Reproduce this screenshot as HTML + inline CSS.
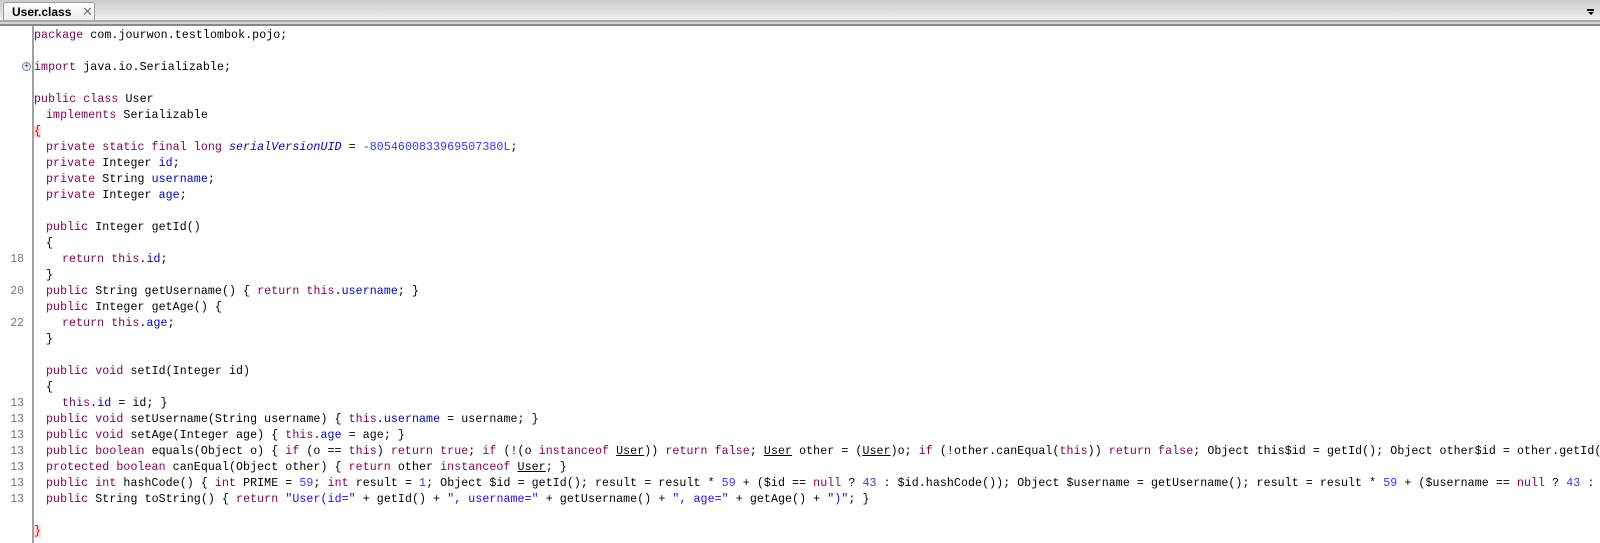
<!DOCTYPE html>
<html><head><meta charset="utf-8"><style>
html,body{margin:0;width:1600px;height:543px;overflow:hidden;background:#fff;font-family:"Liberation Mono",monospace;}
.bar{position:absolute;left:0;top:0;width:1600px;height:20px;background:linear-gradient(#cbcbcb,#efefef);}
.tab{position:absolute;left:3px;top:2px;width:92px;height:19px;background:linear-gradient(#ffffff,#eaeaea);border:1px solid #9a9a9a;border-bottom:none;border-radius:3px 3px 0 0;box-sizing:border-box;font:bold 12px "Liberation Sans",sans-serif;color:#000;}
.tab span{position:absolute;left:8px;top:2px}
.tab i{position:absolute;left:78px;top:1px;font-style:normal;font-weight:normal;color:#777;font-size:13px}
.l1{position:absolute;left:0;top:20px;width:1600px;height:2px;background:#a8a8a8}
.l2{position:absolute;left:0;top:22px;width:1600px;height:2px;background:#d4d4d4}
.l3{position:absolute;left:0;top:24px;width:1600px;height:2px;background:#888}
.gut{position:absolute;left:32px;top:26px;width:2px;height:517px;background:#a0a0a0}
.ln{position:absolute;left:0;width:24px;text-align:right;color:#777;font-size:11.5px;line-height:16px;margin-top:2px}
.c{position:absolute;left:34px;right:0;overflow:hidden;white-space:pre;font-size:11.6px;letter-spacing:0.08px;line-height:16px;color:#000;margin-top:2px}
.k{color:#7f0055}.f{color:#0000c0}.s{color:#2a00ff}.n{color:#3333ff}.it{font-style:italic;color:#0000c0}
.u{text-decoration:underline}
.br{color:#e00;background:#ffd8d8}
.plus{position:absolute;left:22px;top:62px;width:7px;height:7px;border:1px solid #6b7fa0;border-radius:50%;font-size:8px;line-height:7px;text-align:center;color:#334;background:#eef}
.dd{position:absolute;left:1587px;top:9px;width:7px;height:2px;background:#000}
.dd2{position:absolute;left:1588px;top:12px;width:0;height:0;border-left:3px solid transparent;border-right:3px solid transparent;border-top:3px solid #000}
</style></head><body>
<div class="bar"></div>
<div class="tab"><span>User.class</span><i>✕</i></div>
<div class="dd"></div><div class="dd2"></div>
<div class="l1"></div><div class="l2"></div><div class="l3"></div>
<div class="gut"></div>
<div class="plus">+</div>
<div class="ln" style="top:250px">18</div>
<div class="ln" style="top:282px">20</div>
<div class="ln" style="top:314px">22</div>
<div class="ln" style="top:394px">13</div>
<div class="ln" style="top:410px">13</div>
<div class="ln" style="top:426px">13</div>
<div class="ln" style="top:442px">13</div>
<div class="ln" style="top:458px">13</div>
<div class="ln" style="top:474px">13</div>
<div class="ln" style="top:490px">13</div>

<div class="c" style="top:26px"><span class="k">package</span> com.jourwon.testlombok.pojo;</div>
<div class="c" style="top:58px"><span class="k">import</span> java.io.Serializable;</div>
<div class="c" style="top:90px"><span class="k">public class</span> User</div>
<div class="c" style="top:106px;left:46px"><span class="k">implements</span> Serializable</div>
<div class="c" style="top:122px"><span class="br">{</span></div>
<div class="c" style="top:138px;left:46px"><span class="k">private static final long</span> <span class="it">serialVersionUID</span> = <span class="n">-8054600833969507380L</span>;</div>
<div class="c" style="top:154px;left:46px"><span class="k">private</span> Integer <span class="f">id</span>;</div>
<div class="c" style="top:170px;left:46px"><span class="k">private</span> String <span class="f">username</span>;</div>
<div class="c" style="top:186px;left:46px"><span class="k">private</span> Integer <span class="f">age</span>;</div>
<div class="c" style="top:218px;left:46px"><span class="k">public</span> Integer getId()</div>
<div class="c" style="top:234px;left:46px">{</div>
<div class="c" style="top:250px;left:62px"><span class="k">return this</span>.<span class="f">id</span>;</div>
<div class="c" style="top:266px;left:46px">}</div>
<div class="c" style="top:282px;left:46px"><span class="k">public</span> String getUsername() { <span class="k">return this</span>.<span class="f">username</span>; }</div>
<div class="c" style="top:298px;left:46px"><span class="k">public</span> Integer getAge() {</div>
<div class="c" style="top:314px;left:62px"><span class="k">return this</span>.<span class="f">age</span>;</div>
<div class="c" style="top:330px;left:46px">}</div>
<div class="c" style="top:362px;left:46px"><span class="k">public void</span> setId(Integer id)</div>
<div class="c" style="top:378px;left:46px">{</div>
<div class="c" style="top:394px;left:62px"><span class="k">this</span>.<span class="f">id</span> = id; }</div>
<div class="c" style="top:410px;left:46px"><span class="k">public void</span> setUsername(String username) { <span class="k">this</span>.<span class="f">username</span> = username; }</div>
<div class="c" style="top:426px;left:46px"><span class="k">public void</span> setAge(Integer age) { <span class="k">this</span>.<span class="f">age</span> = age; }</div>
<div class="c" style="top:442px;left:46px"><span class="k">public boolean</span> equals(Object o) { <span class="k">if</span> (o == <span class="k">this</span>) <span class="k">return true</span>; <span class="k">if</span> (!(o <span class="k">instanceof</span> <span class="u">User</span>)) <span class="k">return false</span>; <span class="u">User</span> other = (<span class="u">User</span>)o; <span class="k">if</span> (!other.canEqual(<span class="k">this</span>)) <span class="k">return false</span>; Object this$id = getId(); Object other$id = other.getId(); Object</div>
<div class="c" style="top:458px;left:46px"><span class="k">protected boolean</span> canEqual(Object other) { <span class="k">return</span> other <span class="k">instanceof</span> <span class="u">User</span>; }</div>
<div class="c" style="top:474px;left:46px"><span class="k">public int</span> hashCode() { <span class="k">int</span> PRIME = <span class="n">59</span>; <span class="k">int</span> result = <span class="n">1</span>; Object $id = getId(); result = result * <span class="n">59</span> + ($id == <span class="k">null</span> ? <span class="n">43</span> : $id.hashCode()); Object $username = getUsername(); result = result * <span class="n">59</span> + ($username == <span class="k">null</span> ? <span class="n">43</span> : $username</div>
<div class="c" style="top:490px;left:46px"><span class="k">public</span> String toString() { <span class="k">return</span> <span class="s">"User(id="</span> + getId() + <span class="s">", username="</span> + getUsername() + <span class="s">", age="</span> + getAge() + <span class="s">")"</span>; }</div>
<div class="c" style="top:522px"><span class="br">}</span></div>
</body></html>
